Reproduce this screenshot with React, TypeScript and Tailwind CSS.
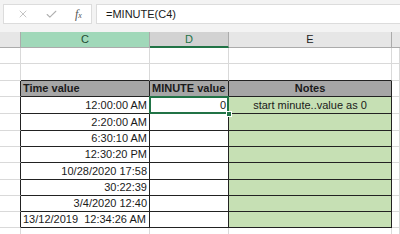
import { Check, X } from 'lucide-react';

const font = { fontFamily: '"Liberation Sans", Arial, sans-serif' };

type Cell = {
  text?: string;
  align?: 'left' | 'right' | 'center';
  bold?: boolean;
  cls: string;
};

const widths = ['w-[21px]', 'w-[129px]', 'w-[79px]', 'w-[163px]', 'w-[8px]'];

const data = [
  '12:00:00 AM',
  '2:20:00 AM',
  '6:30:10 AM',
  '12:30:20 PM',
  '10/28/2020 17:58',
  '30:22:39',
  '3/4/2020 12:40',
];

const heights = ['h-[16px]', 'h-[17px]', 'h-[16px]', 'h-[17px]', 'h-[17px]', 'h-[16px]', 'h-[16px]', 'h-[17px]', 'h-[16px]', 'h-[16px]', 'h-[16px]', 'h-[8px]'];

const grid = 'bg-white border-r border-b border-[#d9d9d9]';

function Row({ cells, h, active }: { cells: Cell[]; h: string; active?: boolean }) {
  return (
    <div className={`flex shrink-0 ${h}`}>
      {cells.map((c, i) => (
        <div
          key={i}
          className={`relative box-border flex items-center px-[2px] overflow-visible whitespace-nowrap text-[11px] text-[#1a1a1a] ${widths[i]} ${c.cls} ${
            c.align === 'right' ? 'justify-end' : c.align === 'center' ? 'justify-center' : 'justify-start'
          } ${c.bold ? 'font-bold' : ''}`}
        >
          {c.text}
          {active && i === 2 && (
            <>
              <div className="absolute left-[-1px] top-[-1px] right-[-1px] bottom-[-1px] border-2 border-[#217346]" />
              <div className="absolute right-[-4px] bottom-[-4px] w-[6px] h-[6px] bg-[#217346] border border-white z-10" />
            </>
          )}
        </div>
      ))}
    </div>
  );
}

export default function App() {
  const blank: Cell[] = [{ cls: grid }, { cls: grid }, { cls: grid }, { cls: grid }, { cls: grid }];
  const blankAboveTable: Cell[] = [
    { cls: grid },
    { cls: 'bg-white border-r border-b border-r-[#d9d9d9] border-b-[#222]' },
    { cls: 'bg-white border-r border-b border-r-[#d9d9d9] border-b-[#222]' },
    { cls: 'bg-white border-r border-b border-r-[#d9d9d9] border-b-[#222]' },
    { cls: grid },
  ];
  const tblHead: Cell[] = [
    { cls: 'bg-white border-r border-b border-r-[#222] border-b-[#d9d9d9]' },
    { text: 'Time value', bold: true, cls: 'bg-[#a6a6a6] border-r border-b border-[#222]' },
    { text: 'MINUTE value', bold: true, cls: 'bg-[#a6a6a6] border-r border-b border-[#222]' },
    { text: 'Notes', bold: true, align: 'center', cls: 'bg-[#a6a6a6] border-r border-b border-[#222]' },
    { cls: grid },
  ];
  const row = (t: string, i: number): Cell[] => [
    { cls: 'bg-white border-r border-b border-r-[#222] border-b-[#d9d9d9]' },
    { text: t, align: 'right', cls: 'bg-white border-r border-b border-[#222]' },
    { text: i === 0 ? '0' : '', align: 'right', cls: 'bg-white border-r border-b border-[#222]' },
    {
      text: i === 0 ? 'start minute..value as 0' : '',
      align: 'center',
      cls: 'bg-[#c6e0b4] border-r border-b border-[#222]',
    },
    { cls: grid },
  ];
  const lastRow: Cell[] = [
    { cls: 'bg-white border-r border-b border-r-[#222] border-b-[#d9d9d9]' },
    { text: '13/12/2019  12:34:26 AM', cls: 'bg-white border-r border-b border-[#222] whitespace-pre' },
    { cls: 'bg-white border-r border-b border-[#222]' },
    { cls: 'bg-[#c6e0b4] border-r border-b border-[#222]' },
    { cls: grid },
  ];

  return (
    <div className="w-[400px] h-[234px] overflow-hidden bg-white flex flex-col" style={font}>
      {/* formula bar */}
      <div className="h-[32px] shrink-0 bg-[#f3f3f3] flex items-start pt-[4px] pl-[3px] gap-[4px]">
        <div className="w-[89px] h-[20px] bg-white border border-[#dcdcdc] flex items-center">
          <X className="w-[12px] h-[12px] ml-[13px] text-[#b0b0b0]" strokeWidth={1.5} />
          <Check className="w-[13px] h-[13px] ml-[16px] text-[#b0b0b0]" strokeWidth={2} />
          <span
            className="ml-[17px] text-[12px] italic text-[#555]"
            style={{ fontFamily: '"Liberation Serif", serif' }}
          >
            f<span className="text-[8px]">x</span>
          </span>
        </div>
        <div className="flex-1 h-[20px] bg-white border border-[#dcdcdc] border-r-0 flex items-center pl-[9px] text-[11px] text-[#1a1a1a]">
          =MINUTE(C4)
        </div>
      </div>
      {/* column headers */}
      <div className="flex h-[16px] shrink-0 text-[11px]">
        <div className="w-[21px] bg-[#e6e6e6] border-b border-r border-[#ababab]" />
        <div className="w-[129px] bg-[#a0d8b9] border-b border-r border-[#ababab] flex items-center justify-center text-[#1e4d33]">
          C
        </div>
        <div className="w-[79px] bg-[#d2d2d2] border-b-2 border-b-[#217346] border-r border-r-[#ababab] flex items-center justify-center text-[#217346]">
          D
        </div>
        <div className="w-[163px] bg-[#e6e6e6] border-b border-r border-[#ababab] flex items-center justify-center text-[#222]">
          E
        </div>
        <div className="w-[8px] bg-[#e6e6e6] border-b border-[#ababab]" />
      </div>
      {/* sheet */}
      <Row cells={blank} h={heights[0]} />
      <Row cells={blankAboveTable} h={heights[1]} />
      <Row cells={tblHead} h={heights[2]} />
      {data.map((t, i) => (
        <Row key={t} cells={row(t, i)} h={heights[3 + i]} active={i === 0} />
      ))}
      <Row cells={lastRow} h={heights[10]} />
      <Row cells={blank} h={heights[11]} />
    </div>
  );
}
